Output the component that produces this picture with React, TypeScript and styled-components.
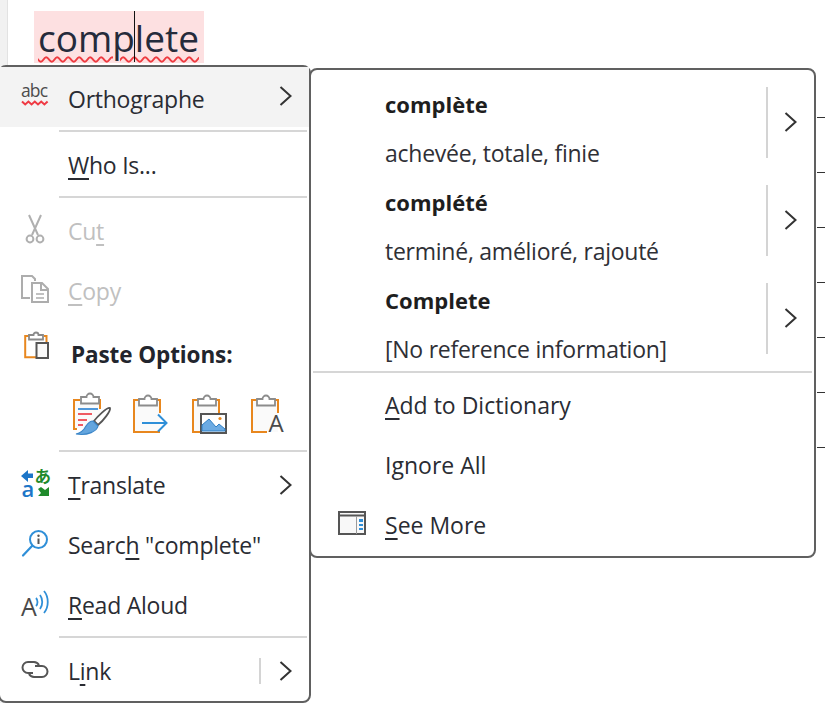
import * as React from "react";
import styled, { createGlobalStyle } from "styled-components";

const GlobalStyle = createGlobalStyle`
  html, body {
    margin: 0;
    padding: 0;
    background: #ffffff;
    overflow: hidden;
  }
  svg {
    display: block;
    overflow: visible;
  }
`;

const FONT = `"Open Sans", "Noto Sans", "Liberation Sans", sans-serif`;

const Page = styled.div`
  position: relative;
  width: 825px;
  height: 703px;
  overflow: hidden;
  background: #fff;
  font-family: ${FONT};
  color: #2a2c33;
`;

const DocArea = styled.div`
  display: flex;
  height: 100%;
`;

const Gutter = styled.div`
  width: 7px;
  background: #f1f1f1;
  border-right: 1px solid #e2e2e2;
`;

const DocBody = styled.div`
  flex: 1;
  padding: 11px 0 0 26px;
`;

const Word = styled.span`
  position: relative;
  display: inline-block;
  height: 52px;
  padding: 0 5px 0 4px;
  background: #fde0e1;
  font-size: 37px;
  line-height: 54px;
  color: #252b3b;
  text-decoration: underline wavy #ee3b41 2px;
  text-underline-offset: 4px;
`;

const Caret = styled.i`
  position: absolute;
  left: 100px;
  top: 0;
  width: 1px;
  height: 51px;
  background: #111;
`;

const Ticks = styled.div`
  position: absolute;
  right: 0;
  top: 117px;
  display: flex;
  flex-direction: column;
  gap: 54px;
`;

const Tick = styled.div`
  width: 8px;
  height: 1px;
  background: #333;
`;

const Popup = styled.div`
  position: absolute;
  box-sizing: border-box;
  background: #fff;
  border: 2px solid #606060;
  border-radius: 8px;
`;

const MainMenu = styled(Popup)`
  left: -2px;
  top: 65px;
  width: 313px;
  height: 638px;
`;

const SpellMenu = styled(Popup)`
  left: 309px;
  top: 68px;
  width: 507px;
  height: 490px;
`;

const Row = styled.div<{ $active?: boolean; $disabled?: boolean }>`
  position: relative;
  display: flex;
  align-items: center;
  box-sizing: border-box;
  height: 60px;
  padding-left: 68px;
  padding-top: ${(p) => (p.$active ? 3 : 0)}px;
  padding-bottom: ${(p) => (p.$active ? 0 : 1)}px;
  font-size: 23px;
  letter-spacing: -0.25px;
  background: ${(p) => (p.$active ? "#f3f3f3" : "transparent")};
  color: ${(p) => (p.$disabled ? "#c0c0c0" : "#2a2c33")};
  u {
    text-underline-offset: 4px;
    text-decoration-thickness: 1.5px;
  }
`;

const SpellRow = styled(Row)`
  padding-left: 74px;
  letter-spacing: 0;
`;

const IconSlot = styled.span`
  position: absolute;
  left: 20px;
  top: 50%;
  width: 30px;
  height: 30px;
  margin-top: -17px;
  display: flex;
  align-items: center;
  justify-content: center;
`;

const SeeMoreSlot = styled(IconSlot)`
  left: 26px;
`;

const RowEnd = styled.span<{ $lift?: boolean }>`
  margin-left: auto;
  display: flex;
  align-items: center;
  padding-right: 17px;
  padding-bottom: ${(p) => (p.$lift ? 5 : 0)}px;
`;

const SplitBar = styled.span`
  width: 2px;
  height: 26px;
  margin-right: 18px;
  background: #d4d4d4;
`;

const Separator = styled.div<{ $tight?: boolean; $full?: boolean }>`
  height: 2px;
  margin: ${(p) => (p.$tight ? "1px" : "3px")} 2px 3px ${(p) => (p.$full ? "2px" : "59px")};
  background: #d6d6d6;
`;

const SpellSeparator = styled(Separator)`
  margin-top: 1px;
  margin-bottom: 2px;
`;

const PasteHeader = styled.div`
  position: relative;
  display: flex;
  align-items: center;
  height: 66px;
  padding-left: 71px;
  font-size: 22.5px;
  font-weight: 700;
  letter-spacing: -0.1px;
  color: #22252d;
`;

const PasteIcon = styled.span`
  position: absolute;
  left: 24px;
  top: 10px;
  display: flex;
`;

const PasteRow = styled.div`
  display: flex;
  align-items: flex-start;
  height: 60px;
  box-sizing: border-box;
  padding: 4px 0 0 72px;
  gap: 23px;
`;

const PasteSlot = styled.span`
  display: block;
  padding-top: 2px;
`;

const Suggestions = styled.div`
  padding-top: 6px;
`;

const Suggestion = styled.div`
  display: flex;
  height: 98px;
  box-sizing: border-box;
  padding-left: 74px;
`;

const SuggestionText = styled.div`
  flex: 1;
  display: flex;
  flex-direction: column;
  gap: 7px;
  padding-top: 7px;
`;

const Line = styled.div<{ $bold?: boolean }>`
  height: 42px;
  line-height: 42px;
  font-size: ${(p) => (p.$bold ? 22 : 23)}px;
  letter-spacing: ${(p) => (p.$bold ? 0 : -0.25)}px;
  font-weight: ${(p) => (p.$bold ? 700 : 400)};
  color: ${(p) => (p.$bold ? "#1e1e1e" : "#2f3036")};
`;

const SuggestionEnd = styled.div`
  display: flex;
  align-items: center;
  align-self: flex-start;
  height: 71px;
  width: 46px;
  margin-top: 11px;
  margin-right: 2px;
  border-left: 2px solid #d4d4d4;
  box-sizing: border-box;
  padding-left: 16px;
  padding-bottom: 2px;
`;

const Chevron = () => (
  <svg width="13" height="20" viewBox="0 0 13 20" fill="none">
    <path d="M1.5 1l10 9-10 9" stroke="#333" strokeWidth="2" />
  </svg>
);

const AbcIcon = () => (
  <svg width="28" height="24" viewBox="0 0 28 24" fill="none">
    <text x="0" y="14" fontFamily={FONT} fontSize="17.5" fill="#4c4c4c" letterSpacing="-0.9">abc</text>
    <path d="M1 18.5l3.2 3 3.2-3 3.2 3 3.2-3 3.2 3 3.2-3 3.2 3 3.2-3" stroke="#ef3a44" strokeWidth="2" />
  </svg>
);

const ScissorsIcon = () => (
  <svg width="20" height="30" viewBox="0 0 20 30" fill="none" stroke="#b0b0b0" strokeWidth="2">
    <path d="M4 1l9 20M16 1L7 21" />
    <circle cx="5" cy="25" r="3.4" />
    <circle cx="15" cy="25" r="3.4" />
  </svg>
);

const CopyIcon = () => (
  <svg width="28" height="28" viewBox="0 0 28 28" fill="none" stroke="#adadad" strokeWidth="2">
    <path d="M9 23H1V1h10l3 3v2" />
    <path d="M11 8h10l6 6v13H11zM20 8v7h7" fill="#fff" />
    <path d="M15 19h8M15 23h8" strokeWidth="1.5" />
  </svg>
);

const PasteOptionsIcon = () => (
  <svg width="25" height="28" viewBox="0 0 25 28" fill="none">
    <path d="M5 5H1.2v21.2H12M20 5h2.5v6" stroke="#e8871e" strokeWidth="2" />
    <path d="M5 8.5V4h4.5a2.5 2.5 0 0 1 5 0H19v4.5z" fill="#fff" stroke="#8a8a8a" strokeWidth="1.8" />
    <rect x="12.5" y="12" width="11.5" height="15" fill="#fafafa" stroke="#555" strokeWidth="2" />
  </svg>
);

const Clip = ({ left = 6 }: { left?: number }) => (
  <path
    d={`M${left} 12.5V6h5.5a3.5 3.5 0 0 1 7 0H${left + 18}v6.5z`}
    fill="#fff"
    stroke="#8c8c8c"
    strokeWidth="1.8"
  />
);

const BoardFill = () => <path d="M2 7h25v32H2z" fill="#fafafa" />;

const BoardOutline = ({ d }: { d: string }) => <path d={d} fill="none" stroke="#e8871e" strokeWidth="2" />;

const PasteKeepIcon = () => (
  <svg width="38" height="44" viewBox="0 0 38 44" fill="none">
    <path d="M2 9h26v28H2z" fill="#fafafa" />
    <BoardOutline d="M8 9H2v29h3M26 9h2v9" />
    <Clip left={9} />
    <path d="M6 18h20" stroke="#4f97d9" strokeWidth="2" />
    <path d="M6 23h14M6 29h9M6 34h5" stroke="#ef5a62" strokeWidth="2" />
    <path d="M38 17c1 3-7 13-12 17l-4-4c3-4 13-14 16-13z" fill="#fff" stroke="#555" strokeWidth="1.8" />
    <path d="M21 30l5 5c-1 5-10 10-22 8 5-1 8-4 10-8 2-3 4-5 7-5z" fill="#63a5de" stroke="#3b86c8" strokeWidth="1.2" />
  </svg>
);

const PasteMergeIcon = () => (
  <svg width="36" height="42" viewBox="0 0 36 42" fill="none">
    <BoardFill />
    <BoardOutline d="M6 7H1v32h26M24 7h3v13" />
    <Clip />
    <path d="M9 30h25M25 21.5l8.5 8.5-8.5 8.5" stroke="#2f8fd8" strokeWidth="2" />
  </svg>
);

const PastePictureIcon = () => (
  <svg width="36" height="42" viewBox="0 0 36 42" fill="none">
    <BoardFill />
    <BoardOutline d="M6 7H1v32h8M24 7h3v13" />
    <Clip />
    <rect x="9" y="21" width="25" height="19" fill="#fff" stroke="#555" strokeWidth="2" />
    <path d="M10 38v-6l7-6 7 8 3-3 6 5v2z" fill="#6cabe3" stroke="#2f7fc4" strokeWidth="1" />
    <circle cx="28" cy="25.5" r="1.6" fill="#e8871e" />
  </svg>
);

const PasteTextIcon = () => (
  <svg width="36" height="42" viewBox="0 0 36 42" fill="none">
    <BoardFill />
    <BoardOutline d="M6 7H1v32h15M24 7h3v13" />
    <Clip />
    <text x="17.5" y="39" fontFamily={FONT} fontSize="24" fill="#4a4a4a">A</text>
  </svg>
);

const TranslateIcon = () => (
  <svg width="28" height="30" viewBox="0 0 28 30" fill="none">
    <text x="0.5" y="29" fontFamily={FONT} fontSize="22" fontWeight="600" fill="#1c76c8">a</text>
    <path d="M0 8l7-6v3.5h5v4.5H7v4z" fill="#1c76c8" />
    <text x="13.5" y="15" fontFamily={`"Noto Sans CJK JP", sans-serif`} fontSize="16.5" fontWeight="700" fill="#1f8a2b">あ</text>
    <path d="M28 28H17l3-3-3-4 3-2 4 3 4-3z" fill="#1f8a2b" />
  </svg>
);

const SearchIcon = () => (
  <svg width="28" height="28" viewBox="0 0 28 28" fill="none">
    <circle cx="17.5" cy="10.5" r="8.5" fill="#fff" stroke="#2f8fd8" strokeWidth="2" />
    <path d="M11 17L2 26.5" stroke="#2f8fd8" strokeWidth="2.2" strokeLinecap="round" />
    <circle cx="17.5" cy="6.8" r="1.2" fill="#555" />
    <path d="M17.5 9.5v5.5" stroke="#555" strokeWidth="2" />
  </svg>
);

const ReadAloudIcon = () => (
  <svg width="28" height="28" viewBox="0 0 28 28" fill="none">
    <text x="0" y="27" fontFamily={FONT} fontSize="25" fill="#4a4a4a">A</text>
    <path d="M15 9c2 2 2 6 0 8M19 6c3 4 3 10 0 14M23 2c5 6 5 16 0 22" stroke="#2f8fd8" strokeWidth="1.8" />
  </svg>
);

const LinkIcon = () => (
  <svg width="28" height="17" viewBox="0 0 28 17" fill="none" stroke="#555" strokeWidth="2">
    <path d="M12 12H7A5.5 5.5 0 0 1 7 1h6a6 6 0 0 1 5 3" />
    <path d="M14 5h7a5.5 5.5 0 0 1 0 11h-8a6 6 0 0 1-5-3" />
  </svg>
);

const SeeMoreIcon = () => (
  <svg width="28" height="24" viewBox="0 0 28 24" fill="none">
    <rect x="1" y="1" width="26" height="22" fill="#f8f8f8" stroke="#555" strokeWidth="2" />
    <path d="M1 4.5h26" stroke="#555" strokeWidth="2" />
    <path d="M18.5 5v18" stroke="#9a9a9a" strokeWidth="1" />
    <path d="M21 8h4v3h-4zM21 13h4v2h-4zM21 17h4v2h-4z" fill="#2f8fd8" />
  </svg>
);

const suggestions = [
  { word: "complète", meaning: "achevée, totale, finie" },
  { word: "complété", meaning: "terminé, amélioré, rajouté" },
  { word: "Complete", meaning: "[No reference information]" },
];

export default function App() {
  return (
    <Page>
      <GlobalStyle />
      <DocArea>
        <Gutter />
        <DocBody>
          <Word>
            complete
            <Caret />
          </Word>
        </DocBody>
      </DocArea>
      <Ticks>
        {[0, 1, 2, 3, 4, 5, 6].map((i) => (
          <Tick key={i} />
        ))}
      </Ticks>

      <MainMenu>
        <Row $active>
          <IconSlot><AbcIcon /></IconSlot>
          Orthographe
          <RowEnd $lift><Chevron /></RowEnd>
        </Row>
        <Separator />
        <Row><span><u>W</u>ho Is...</span></Row>
        <Separator $tight />
        <Row $disabled>
          <IconSlot><ScissorsIcon /></IconSlot>
          <span>Cu<u>t</u></span>
        </Row>
        <Row $disabled>
          <IconSlot><CopyIcon /></IconSlot>
          <span><u>C</u>opy</span>
        </Row>
        <PasteHeader>
          <PasteIcon><PasteOptionsIcon /></PasteIcon>
          Paste Options:
        </PasteHeader>
        <PasteRow>
          <PasteKeepIcon />
          <PasteSlot><PasteMergeIcon /></PasteSlot>
          <PasteSlot><PastePictureIcon /></PasteSlot>
          <PasteSlot><PasteTextIcon /></PasteSlot>
        </PasteRow>
        <Separator />
        <Row>
          <IconSlot><TranslateIcon /></IconSlot>
          <span><u>T</u>ranslate</span>
          <RowEnd><Chevron /></RowEnd>
        </Row>
        <Row>
          <IconSlot><SearchIcon /></IconSlot>
          <span>Searc<u>h</u> "complete"</span>
        </Row>
        <Row>
          <IconSlot><ReadAloudIcon /></IconSlot>
          <span><u>R</u>ead Aloud</span>
        </Row>
        <Separator $tight />
        <Row>
          <IconSlot><LinkIcon /></IconSlot>
          <span>L<u>i</u>nk</span>
          <RowEnd>
            <SplitBar />
            <Chevron />
          </RowEnd>
        </Row>
      </MainMenu>

      <SpellMenu>
        <Suggestions>
          {suggestions.map((s) => (
            <Suggestion key={s.word}>
              <SuggestionText>
                <Line $bold>{s.word}</Line>
                <Line>{s.meaning}</Line>
              </SuggestionText>
              <SuggestionEnd><Chevron /></SuggestionEnd>
            </Suggestion>
          ))}
        </Suggestions>
        <SpellSeparator $full />
        <SpellRow><span><u>A</u>dd to Dictionary</span></SpellRow>
        <SpellRow><span>I<u>g</u>nore All</span></SpellRow>
        <SpellRow>
          <SeeMoreSlot><SeeMoreIcon /></SeeMoreSlot>
          <span><u>S</u>ee More</span>
        </SpellRow>
      </SpellMenu>
    </Page>
  );
}
